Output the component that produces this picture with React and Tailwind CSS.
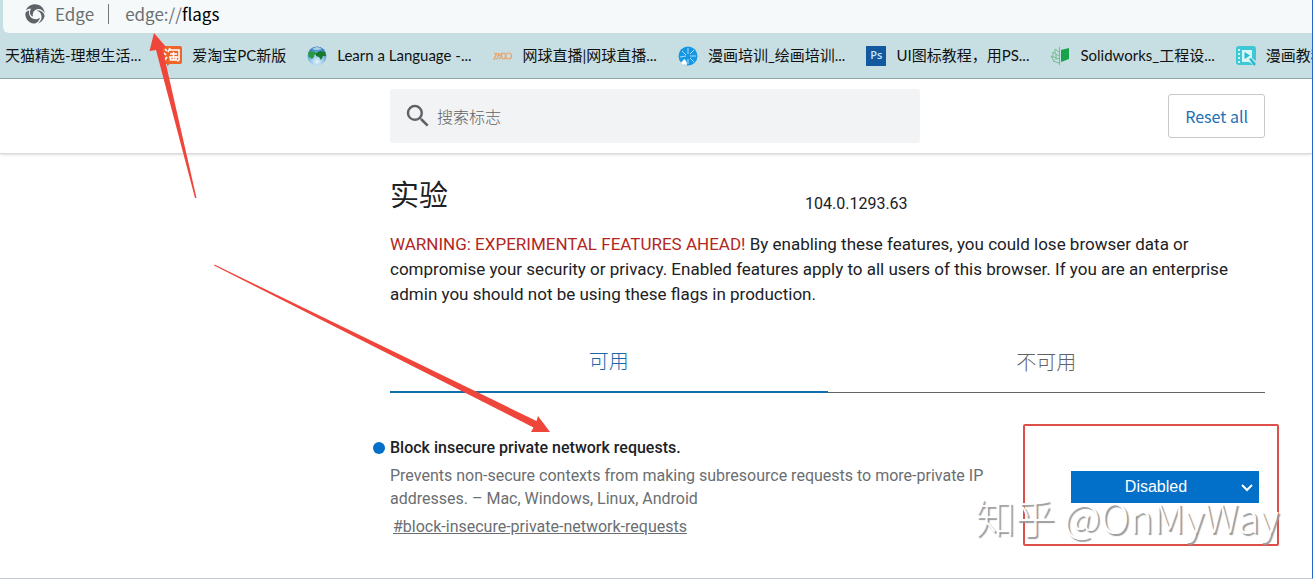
import { MdSearch } from "react-icons/md";

const uiFont = "font-['Noto_Sans_CJK_SC','Open_Sans',sans-serif]";

function EdgeLogo() {
  return (
    <svg viewBox="0 0 20 20" className="size-5 shrink-0" fill="#5f6368" aria-hidden="true">
      <path d="M0.800 6.500C2.500 2.500 6 0.300 10 0.300C15.500 0.300 19.500 4.500 19.700 9.500C18 5.500 13.500 4 10.300 6C8 7.500 7.300 10 8 12.500C4.500 11.500 4 7.500 6.300 4.800C4 4.600 2 5.200 0.800 6.500Z" />
      <path d="M0.300 9.500C1 7.800 2.500 6.700 4.200 6.500C2.800 11 6.500 15.500 11 15.300C12.500 15.200 13.800 14.700 15 13.800C14 17.500 11 19.700 8.500 19.600C4 19 0.300 15 0.300 9.500Z" />
      <path d="M11.500 6.800C15.500 5.500 19.300 8.500 19.600 12C18.700 15.800 16 18.700 12.500 19.500C15.800 17.500 17.200 14 16.300 11C15.500 8.500 13.800 7.300 11.500 6.800Z" />
    </svg>
  );
}

function TaobaoIcon() {
  return (
    <svg viewBox="0 0 20 20" className="size-5 shrink-0" aria-hidden="true">
      <path fill="#f0642a" d="M2 0H18Q20 0 20 2V16Q20 18 18 18H8L5 20V18H2Q0 18 0 16V2Q0 0 2 0Z" />
      <g fill="none" stroke="#fff" strokeWidth="1.600">
        <path d="M3 3L5 5M2 7L4 9M2 15L5 11M8 2L6 6M7 4H17V14L15 15M8 8H15M7 11H16M11.500 6V14M8.500 11V14H14V11" />
      </g>
    </svg>
  );
}

function GlobeIcon() {
  return (
    <svg viewBox="0 0 20 20" className="size-5 shrink-0" aria-hidden="true">
      <defs>
        <radialGradient id="sea" cx="50%" cy="80%" r="75%">
          <stop offset="0" stopColor="#e3f4fb" />
          <stop offset="0.5" stopColor="#8cc3e6" />
          <stop offset="1" stopColor="#2878bd" />
        </radialGradient>
      </defs>
      <circle cx="10" cy="10" r="9.500" fill="url(#sea)" />
      <path fill="#2a9a3c" d="M1 7L4 5L8 6L10 8L7 9L7 11L5 13L2 11Z" />
      <path fill="#157a2e" d="M9 7L13 5L18 6L19 10L16 10L14 14L12 11L9 10Z" />
      <path fill="#fff" opacity=".6" d="M5 3Q10 -1 15 3Q10 5 5 3Z" />
    </svg>
  );
}

function TennisIcon() {
  return (
    <svg viewBox="0 0 20 20" className="size-5 shrink-0" aria-hidden="true">
      <g fill="none" stroke="#eda066" strokeWidth="1.200">
        <path d="M1 7L3 8M4 7L1 13H4M6 7L4 13M6 10L9 7M6 13L9 10" />
        <ellipse cx="10.500" cy="10" rx="2" ry="3" />
        <ellipse cx="15.500" cy="10" rx="3" ry="3" />
      </g>
    </svg>
  );
}

function ComicIcon() {
  return (
    <svg viewBox="0 0 20 20" className="size-5 shrink-0" aria-hidden="true">
      <circle cx="10" cy="10" r="9.500" fill="#1797e3" />
      <path stroke="#a8def9" strokeWidth="1" d="M10 2V8M4 5L8 9M2 11L8 10M16 4L12 8M18 10H12M16 16L12 12M10 18V13" />
      <path fill="#fff" d="M3 17C4 15 5 15 6 13C8 14 9 16 9 19C6 19 4 18 3 17Z" />
    </svg>
  );
}

function PhotoshopIcon() {
  return (
    <span className="flex size-5 shrink-0 items-center justify-center bg-[#12599f] font-['Open_Sans',sans-serif] text-[11px] font-semibold text-[#c5e7ff]">
      Ps
    </span>
  );
}

function SolidworksIcon() {
  return (
    <svg viewBox="0 0 20 20" className="size-5 shrink-0" aria-hidden="true">
      <path fill="#16a34a" d="M11 4L19 2V13L11 16Z" />
      <path fill="none" stroke="#6fc08c" strokeWidth="1" d="M9.500 1V19M9 6L5 3M9 10L3 6M9 13L1 10M9 17L3 15M5 3V7M3 6V11M6 8V14M1 10L4 15" />
    </svg>
  );
}

function CourseIcon() {
  return (
    <svg viewBox="0 0 20 20" className="size-5 shrink-0" aria-hidden="true">
      <path fill="#3cc8d6" d="M3 0H17Q20 0 20 3V15L16 12V4H6V16H13L17 19H3Q0 19 0 16V3Q0 0 3 0Z" />
      <path fill="#d9f5f6" d="M6 4H16V12L18 17L13 16H6Z" />
      <path fill="#22bfd0" d="M8.500 6L14 9.500L8.500 13ZM13 13L15 12L20 18L18 20Z" />
      <path stroke="#fff" strokeWidth="1.500" strokeDasharray="2 2" d="M3 3V17" />
    </svg>
  );
}

const bookmarks = [
  { label: "天猫精选-理想生活..." },
  { label: "爱淘宝PC新版", Icon: TaobaoIcon },
  { label: "Learn a Language -...", Icon: GlobeIcon },
  { label: "网球直播|网球直播...", Icon: TennisIcon },
  { label: "漫画培训_绘画培训...", Icon: ComicIcon },
  { label: "UI图标教程，用PS...", Icon: PhotoshopIcon },
  { label: "Solidworks_工程设...", Icon: SolidworksIcon },
  { label: "漫画教程", Icon: CourseIcon },
];

function BrowserBar() {
  return (
    <div className={`bg-[#c7dfe3] ${uiFont}`}>
      <div className="ml-[3px] flex h-[33px] items-center rounded-bl-md bg-[#f5f9fa] pb-[6px] pl-[22px] text-[17px] text-[#6b6f72]">
        <EdgeLogo />
        <span className="ml-[10px]">Edge</span>
        <span className="ml-[14px] mr-4 h-5 w-px bg-[#777]" />
        <span>
          edge://<span className="text-black">flags</span>
        </span>
      </div>
      <nav className="flex h-[46px] items-center gap-[21px] overflow-hidden border-b border-[#93aaac] pl-[5px] font-['Lato','Noto_Sans_CJK_SC',sans-serif] text-[15px] text-[#111]">
        {bookmarks.map(({ label, Icon }) => (
          <a key={label} href="#" className="flex shrink-0 items-center gap-[10px] whitespace-nowrap">
            {Icon && <Icon />}
            {label}
          </a>
        ))}
      </nav>
    </div>
  );
}

function SearchHeader() {
  return (
    <header className="flex h-[75px] items-center justify-between border-b border-[#dcdcdc] pl-[390px] pr-[47px] shadow-sm">
      <label className="flex h-[54px] w-[530px] items-center rounded-[3px] bg-[#f1f3f4] pl-[13px]">
        <MdSearch className="size-[30px] text-[#5f6368]" />
        <input
          type="text"
          aria-label="搜索标志"
          placeholder="搜索标志"
          className={`ml-1 flex-1 bg-transparent text-[16px] font-light outline-none placeholder:text-[#5f6368] ${uiFont}`}
        />
      </label>
      <button className={`h-11 rounded-[3px] border border-[#c8c8c8] px-4 text-[16px] text-[#2070b8] ${uiFont}`}>
        Reset all
      </button>
    </header>
  );
}

function FlagRow() {
  return (
    <section className="relative mt-[43px] flex justify-between">
      <span className="absolute -left-[17px] top-[6px] size-3 rounded-full bg-[#0270c9]" />
      <div className="w-[610px] text-[16px] leading-[23px] text-[#6a6e72]">
        <h2 className="font-medium text-[#202124]">Block insecure private network requests.</h2>
        <p className="mt-[5px]">
          Prevents non-secure contexts from making subresource requests to more-private IP addresses. – Mac, Windows,
          Linux, Android
        </p>
        <a href="#block-insecure-private-network-requests" className="ml-[3px] mt-[5px] inline-block underline">
          #block-insecure-private-network-requests
        </a>
      </div>
      <div className="relative mr-[6px] mt-[35px] h-8 w-[188px]">
        <select
          aria-label="Block insecure private network requests."
          defaultValue="Disabled"
          className="h-8 w-full appearance-none bg-[#0270c9] pr-[18px] text-center font-['Liberation_Sans',sans-serif] text-[16px] text-white"
        >
          <option>Default</option>
          <option>Enabled</option>
          <option>Disabled</option>
        </select>
        <svg viewBox="0 0 12 8" className="absolute right-[6px] top-[13px] h-2 w-3" aria-hidden="true">
          <path d="M1 1L6 6L11 1" fill="none" stroke="#fff" strokeWidth="2" />
        </svg>
        <div className="absolute -left-12 -top-[47px] h-[122px] w-[256px] rounded-[2px] border-2 border-[#dd4f49]" />
        <div
          className={`pointer-events-none absolute -right-5 top-[17px] whitespace-nowrap text-[40px] font-light leading-[56px] text-white [text-shadow:2px_2px_1px_#999] ${uiFont}`}
        >
          知乎 @OnMyWay
        </div>
      </div>
    </section>
  );
}

function Arrows() {
  return (
    <svg width="600" height="450" viewBox="0 0 600 450" className="pointer-events-none absolute left-0 top-0" aria-hidden="true">
      <path fill="#ef463b" d="M154 33L166 47L162.500 49L196.500 198L195 198L156 50L149.500 51Z" />
      <path fill="#ef463b" d="M550 432L531 432L533.500 427.500L214 265.500L214.500 264.500L536.500 421L538 416Z" />
    </svg>
  );
}

export default function App() {
  return (
    <div className="relative min-h-screen overflow-hidden border-b border-r border-b-[#c3cad6] border-r-[#2b63d2] bg-white font-['Roboto',sans-serif]">
      <BrowserBar />
      <SearchHeader />
      <main className="pl-[390px] pr-[47px] text-[#202124]">
        <div className="flex h-[78px] items-center">
          <h1 className={`w-[415px] text-[29px] leading-[40px] ${uiFont}`}>实验</h1>
          <span className="pt-[22px] text-[16px]">104.0.1293.63</span>
        </div>
        <p className="text-[17px] leading-[25px]">
          <span className="text-[#b3261e]">WARNING: EXPERIMENTAL FEATURES AHEAD!</span> By enabling these features, you
          could lose browser data or compromise your security or privacy. Enabled features apply to all users of this
          browser. If you are an enterprise admin you should not be using these flags in production.
        </p>
        <div role="tablist" className={`mt-6 grid grid-cols-2 text-[20px] font-light ${uiFont}`}>
          <button role="tab" aria-selected="true" className="h-[62px] border-b-2 border-[#1170ac] text-[#1967a8]">
            可用
          </button>
          <button role="tab" aria-selected="false" className="h-[62px] border-b border-[#5f6368] text-[#5f6368]">
            不可用
          </button>
        </div>
        <FlagRow />
      </main>
      <Arrows />
    </div>
  );
}
